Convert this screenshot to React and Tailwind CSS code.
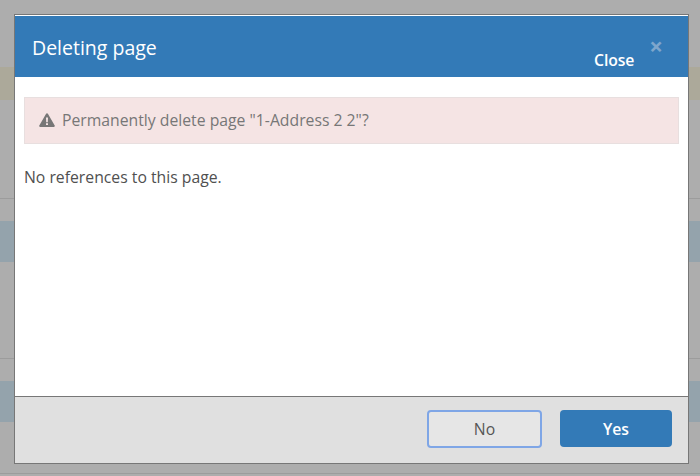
import React from 'react';

function WarningIcon() {
  return (
    <svg className="w-[16px] h-[14px] shrink-0" viewBox="0 0 16 14">
      <path fill="#777" fillRule="evenodd" d="M8 0.3 C8.4 0.3 8.7 0.5 8.9 0.8 L15.7 12.6 C16.1 13.2 15.7 14 14.9 14 L1.1 14 C0.3 14 -0.1 13.2 0.3 12.6 L7.1 0.8 C7.3 0.5 7.6 0.3 8 0.3 Z M7 4.6 L7.2 9.2 L8.8 9.2 L9 4.6 Z M7 10.3 L7 12.1 L9 12.1 L9 10.3 Z" />
    </svg>
  );
}

export default function App() {
  return (
    <div className="relative w-[700px] h-[476px] overflow-hidden bg-[#adadad] font-['Open_Sans',sans-serif]">
      {/* dimmed page behind the dialog */}
      <div className="pt-[67px]">
        <div className="h-[33px] bg-[#aca99a]" />
        <div className="mt-[98px] h-px bg-[#9c9c9c]" />
        <div className="mt-[22px] h-[41px] bg-[#94a3ac]" />
        <div className="mt-[96px] h-px bg-[#9c9c9c]" />
        <div className="mt-[22px] h-[41px] bg-[#94a3ac]" />
        <div className="mt-[51px] h-px bg-[#9c9c9c]" />
      </div>

      <div className="absolute left-[14px] top-[14px] w-[675px] h-[450px] flex flex-col border border-[#777777] bg-white pt-px">
        <div className="h-[61px] shrink-0 flex bg-[#337ab7] text-white">
          <h4 className="pl-[17px] pt-[18px] text-[19.5px] leading-[27px]">Deleting page</h4>
          <div className="ml-auto flex items-start">
            <span className="mt-[34px] text-[15.75px] leading-[21px] font-semibold tracking-[-0.1px]">Close</span>
            <span className="ml-[15px] mr-[25px] mt-[17px] text-[24px] leading-[26px] font-bold text-[#7ea6cc]">×</span>
          </div>
        </div>

        <div className="flex-1 px-[9px] pt-[20px] text-[#505050]">
          <div className="h-[47px] flex items-center gap-[7px] pl-[14px] bg-[#f5e4e4] border border-[#e8dfdf] text-[#777777] text-[15.75px]">
            <span className="-mt-px">
              <WarningIcon />
            </span>
            <span>Permanently delete page "1-Address 2 2"?</span>
          </div>
          <p className="mt-[23px] text-[15.75px] leading-[21px]">No references to this page.</p>
        </div>

        <div className="h-[67px] shrink-0 flex items-center justify-end gap-[18px] pr-[16px] bg-[#e0e0e0] border-t border-[#777777] pb-[3px]">
          <button className="w-[115px] h-[38px] pt-[3px] rounded-[4px] border-2 border-[#7fa6e6] bg-[#e6e6e6] text-[15.75px] text-[#555555]">No</button>
          <button className="w-[112px] h-[37px] pt-[2px] rounded-[4px] bg-[#337ab7] text-[15.75px] font-semibold text-white">Yes</button>
        </div>
      </div>
    </div>
  );
}
